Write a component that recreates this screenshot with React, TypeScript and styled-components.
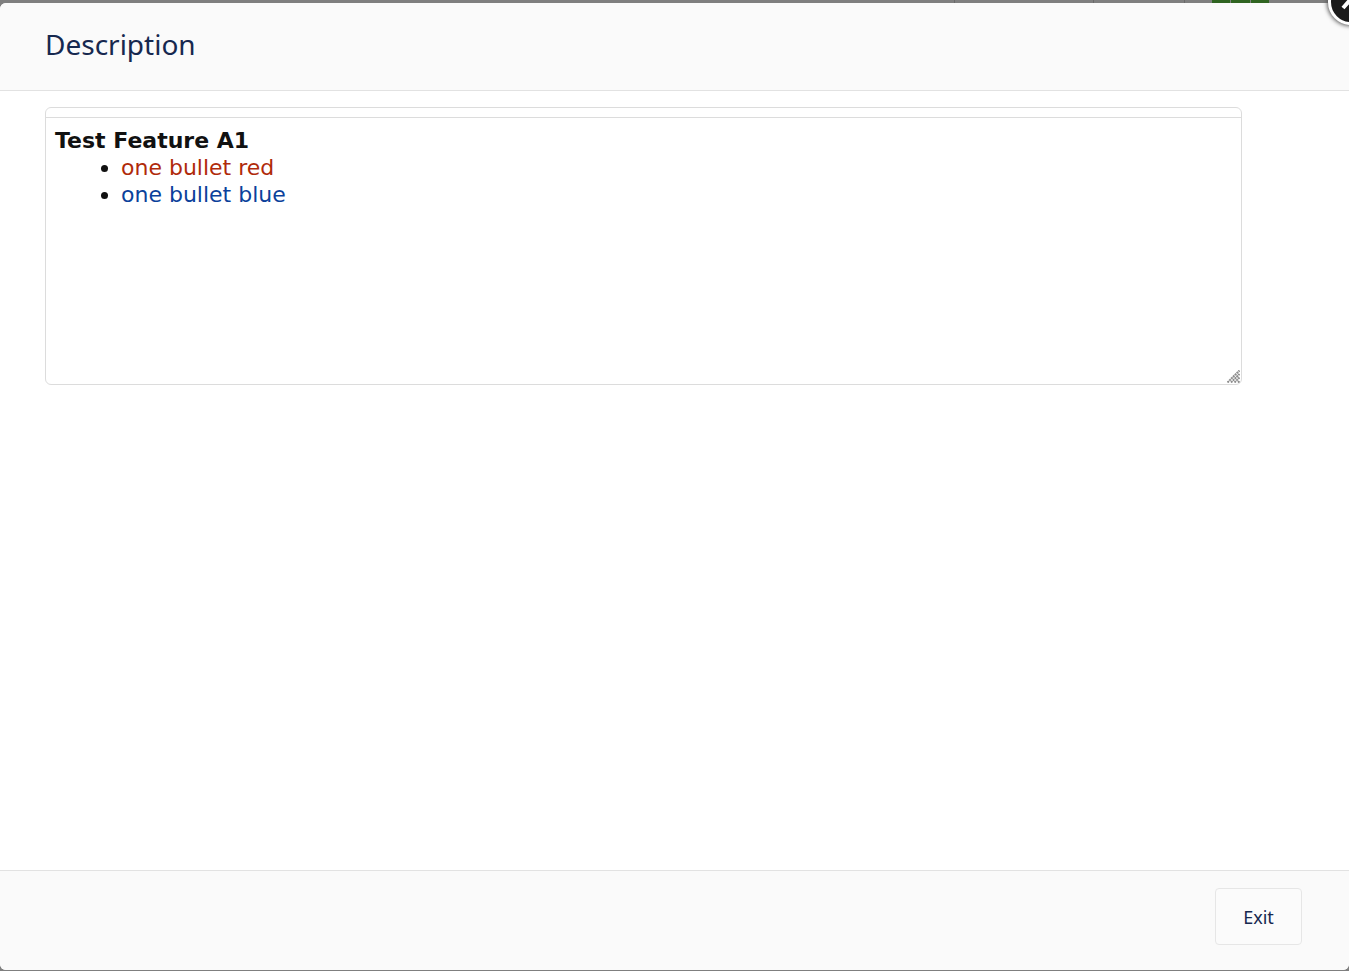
import React from "react";
import styled, { createGlobalStyle } from "styled-components";

const GlobalStyle = createGlobalStyle`
  *, *::before, *::after { box-sizing: border-box; }
  body { margin: 0; background: #7f7f7f; }
`;

const Page = styled.div`
  position: relative;
  display: flex;
  flex-direction: column;
  min-height: 100vh;
  padding-bottom: 1px;
  overflow: hidden;
  background: #7f7f7f;
  color: #16284f;
  font-family: "Noto Sans", "Open Sans", sans-serif;
`;

const Backdrop = styled.div`
  display: flex;
  justify-content: flex-end;
  gap: 1px;
  height: 3px;
  padding-right: 80px;
`;

const Divider = styled.span<{ $space: number }>`
  width: 1px;
  margin-right: ${(p) => p.$space}px;
  background: #6a6a6a;
`;

const GreenCell = styled.span<{ $width: number }>`
  width: ${(p) => p.$width}px;
  background: #2f6421;
`;

const Dialog = styled.section`
  flex: 1;
  display: flex;
  flex-direction: column;
  border-radius: 6px;
  overflow: hidden;
  background: #fff;
`;

const Header = styled.header`
  height: 88px;
  padding: 20px 45px;
  border-bottom: 1px solid #e2e2e2;
  background: #fafafa;
`;

const Title = styled.h1`
  margin: 0;
  font-size: 28px;
  line-height: 42px;
  font-weight: 400;
`;

const Body = styled.main`
  flex: 1;
  padding: 16px 107px 16px 45px;
`;

const Editor = styled.div`
  position: relative;
  height: 278px;
  border: 1px solid #dcdcdc;
  border-radius: 6px;
  background: #fff;
`;

const Toolbar = styled.div`
  height: 10px;
  border-bottom: 1px solid #dcdcdc;
`;

const Content = styled.div`
  padding: 9px;
  color: #111;
  font-family: Verdana, "DejaVu Sans", sans-serif;
  font-size: 22px;
  line-height: 27px;
  outline: none;
`;

const Heading = styled.p`
  margin: 0;
  font-weight: 700;
`;

const Bullets = styled.ul`
  margin: 0;
  padding-left: 66px;
`;

const Colored = styled.span<{ $color: string }>`
  color: ${(p) => p.$color};
`;

const Grip = styled.svg`
  position: absolute;
  right: 1px;
  bottom: 1px;
`;

const Footer = styled.footer`
  display: flex;
  justify-content: flex-end;
  height: 100px;
  padding: 17px 47px;
  border-top: 1px solid #e2e2e2;
  background: #fafafa;
`;

const ExitButton = styled.button`
  width: 87px;
  height: 57px;
  padding: 0;
  border: 1px solid #e6e6e6;
  border-radius: 4px;
  background: #fbfbfb;
  color: inherit;
  font-family: inherit;
  font-size: 18px;
  line-height: 24px;
`;

const CloseButton = styled.button`
  position: absolute;
  top: -21px;
  right: -25px;
  display: flex;
  align-items: center;
  justify-content: center;
  width: 46px;
  height: 46px;
  padding: 0;
  border: 3px solid #fff;
  border-radius: 50%;
  background: #1b1b1b;
  box-shadow: 0 0 4px 1px #555;
`;

export default function App() {
  return (
    <>
      <GlobalStyle />
      <Page>
        <Backdrop aria-hidden="true">
          <Divider $space={137} />
          <Divider $space={89} />
          <Divider $space={26} />
          <GreenCell $width={18} />
          <GreenCell $width={19} />
          <GreenCell $width={18} />
        </Backdrop>
        <Dialog role="dialog" aria-labelledby="dialog-title">
          <Header>
            <Title id="dialog-title">Description</Title>
          </Header>
          <Body>
            <Editor>
              <Toolbar />
              <Content
                role="textbox"
                aria-multiline="true"
                aria-labelledby="dialog-title"
                contentEditable
                suppressContentEditableWarning
                spellCheck={false}
              >
                <Heading>Test Feature A1</Heading>
                <Bullets>
                  <li><Colored $color="#b02a0a">one bullet red</Colored></li>
                  <li><Colored $color="#0b419b">one bullet blue</Colored></li>
                </Bullets>
              </Content>
              <Grip width="13" height="13" viewBox="0 0 13 13" fill="none" aria-hidden="true">
                <path
                  d="M0.5 12.5 12.5 0.5M4 12.5 12.5 4M7.5 12.5 12.5 7.5M11 12.5 12.5 11"
                  stroke="#8c8c8c"
                  strokeWidth="2"
                  strokeDasharray="2 0.6"
                />
              </Grip>
            </Editor>
          </Body>
          <Footer>
            <ExitButton type="button">Exit</ExitButton>
          </Footer>
        </Dialog>
        <CloseButton type="button" aria-label="Close">
          <svg width="40" height="40" viewBox="0 0 40 40" aria-hidden="true">
            <path d="M12 26 27 9M12 9 27 26" stroke="#fff" strokeWidth="4" />
          </svg>
        </CloseButton>
      </Page>
    </>
  );
}
